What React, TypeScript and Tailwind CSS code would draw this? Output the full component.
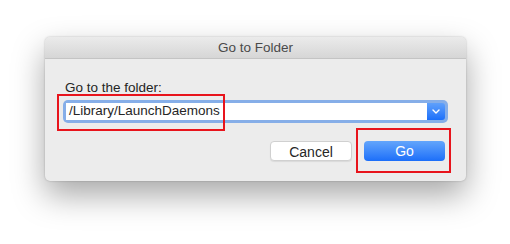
import React from 'react';

const App: React.FC = () => {
    return (
        <div className="h-[244px] w-[510px] bg-white pl-[45px] pt-[37px]" style={{fontFamily: '"Liberation Sans", Arial, sans-serif'}}>
            <div className="relative h-[144px] w-[421px] overflow-visible rounded-[5px] bg-[#ececec] shadow-[0_14px_32px_rgba(0,0,0,0.35),0_0_2px_rgba(0,0,0,0.25)]">
                {/* title bar */}
                <div className="flex h-[22px] items-center justify-center rounded-t-[5px] border-b border-[#c4c4c4] bg-gradient-to-b from-[#ebebeb] to-[#d6d6d6] pt-[2px] text-[13.5px] text-[#4a4a4a]">
                    Go to Folder
                </div>

                <div className="px-[18px] pt-[21px]">
                    <div className="pl-[2px] text-[13.5px] leading-[16px] text-[#242424]">Go to the folder:</div>

                    {/* combo box with focus ring */}
                    <div className="mt-[4px] flex h-[23px] w-[385px] rounded-[5px] bg-[#86aee8] p-[3px]">
                        <div className="flex flex-1 items-center bg-white pl-[3px] text-[13.5px] text-[#262626]">
                            /Library/LaunchDaemons
                        </div>
                        <div className="flex w-[18px] items-center justify-center rounded-r-[3px] bg-gradient-to-b from-[#5fa0fb] to-[#1a6ffa]">
                            <svg width="8" height="5" viewBox="0 0 8 5" fill="none">
                                <path d="M1 1l3 3 3-3" stroke="white" strokeWidth="1.4" strokeLinecap="round" strokeLinejoin="round"/>
                            </svg>
                        </div>
                    </div>

                    <div className="mt-[18px] flex justify-end gap-[12px] pr-[3px]">
                        <button className="h-[20px] w-[82px] rounded-[4px] border border-[#d0d0d0] bg-white text-[14px] text-[#262626] shadow-[0_1px_1px_rgba(0,0,0,0.08)]">
                            Cancel
                        </button>
                        <button className="h-[20px] w-[81px] rounded-[4px] bg-gradient-to-b from-[#63a5fb] to-[#1b6ef9] text-[14px] text-white">
                            Go
                        </button>
                    </div>
                </div>

                {/* annotation boxes */}
                <div className="absolute left-[12px] top-[57px] h-[37px] w-[168px] border-2 border-[#e8141c]"/>
                <div className="absolute left-[311px] top-[91px] h-[45px] w-[95px] border-2 border-[#e8141c]"/>
            </div>
        </div>
    );
};

export default App;
